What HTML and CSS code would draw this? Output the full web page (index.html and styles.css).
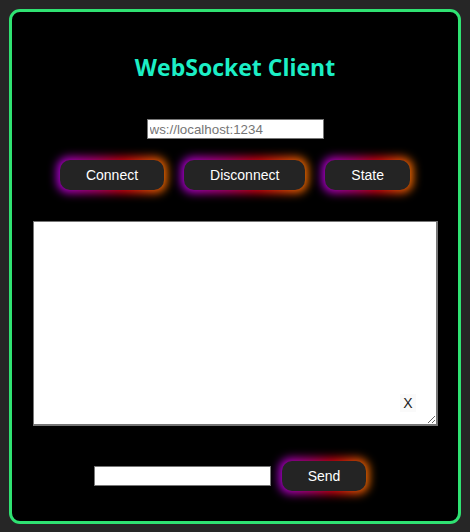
FILE: index.html
```html
<!DOCTYPE html>
<html>
<head>
<meta charset="utf-8">
<link rel="stylesheet" href="styles.css">
</head>
<body>
<div class="card">
  <h1 class="title">WebSocket Client</h1>
  <input class="url" type="text" placeholder="ws://localhost:1234">
  <div class="actions">
    <button class="glow">Connect</button>
    <button class="glow">Disconnect</button>
    <button class="glow">State</button>
  </div>
  <div class="log-wrap">
    <textarea class="log"></textarea>
    <span class="clear">X</span>
  </div>
  <div class="send-row">
    <input class="msg" type="text">
    <button class="glow">Send</button>
  </div>
</div>
</body>
</html>
```
FILE: styles.css
```css
html, body {
  background: #262626;
}
body {
  margin: 9px 9px 8px;
  font-family: "Liberation Sans", Arial, sans-serif;
}
.card {
  position: relative;
  z-index: 0;
  box-sizing: border-box;
  height: 515px;
  background: #000;
  border: 3px solid #2fe272;
  border-radius: 11px;
  display: flex;
  flex-direction: column;
  align-items: center;
  padding-top: 39px;
}
.title {
  margin: 0;
  font-family: "Open Sans", sans-serif;
  font-weight: 700;
  font-size: 23px;
  line-height: 32px;
  color: #1cefc6;
}
.url, .msg {
  font-family: "Liberation Sans", Arial, sans-serif;
  font-size: 13.33px;
  width: 177px;
  height: 20px;
  box-sizing: border-box;
  padding: 1px 2px;
  border: 1px solid #767676;
  background: #fff;
  outline: none;
}
.url {
  margin-top: 36px;
}
.url::placeholder {
  color: #757575;
}
.actions {
  display: flex;
  gap: 20px;
  margin-top: 21px;
}
.glow {
  position: relative;
  height: 30px;
  padding: 0 26px;
  border: none;
  border-radius: 10px;
  background: #242424;
  color: #fff;
  font-family: "Liberation Sans", Arial, sans-serif;
  font-size: 14px;
}
.glow::before {
  content: "";
  position: absolute;
  inset: -3px;
  border-radius: 12px;
  background: linear-gradient(90deg, #b000e0 0%, #c0007a 35%, #e00010 60%, #ff7a00 100%);
  filter: blur(5px);
  z-index: -1;
}
.log-wrap {
  position: relative;
  margin-top: 31px;
  width: 405px;
  height: 205px;
}
.log {
  box-sizing: border-box;
  width: 405px;
  height: 205px;
  margin: 0;
  display: block;
  border: 1px solid #767676;
  border-right-width: 2px;
  border-bottom-width: 2px;
  background: #fff;
  resize: both;
}
.clear {
  position: absolute;
  right: 22px;
  bottom: 14px;
  padding: 1px 3px;
  background: #fafafa;
  color: #222;
  font-size: 14px;
  line-height: 16px;
}
.send-row {
  display: flex;
  align-items: center;
  gap: 11px;
  margin-top: 35px;
  padding-right: 10px;
}
.msg {
  width: 177px;
}
```
